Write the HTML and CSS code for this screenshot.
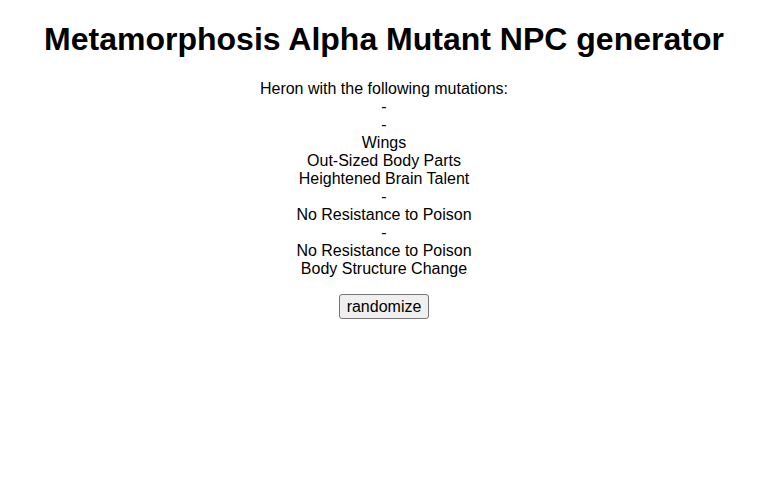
FILE: index.html
```html
<!DOCTYPE html>
<html>
<head>
<meta charset="utf-8">
<link rel="stylesheet" href="styles.css">
</head>
<body>
<h1 class="title">Metamorphosis Alpha Mutant NPC generator</h1>
<div class="result">
<div>Heron with the following mutations:</div>
<div>-</div>
<div>-</div>
<div>Wings</div>
<div>Out-Sized Body Parts</div>
<div>Heightened Brain Talent</div>
<div>-</div>
<div>No Resistance to Poison</div>
<div>-</div>
<div>No Resistance to Poison</div>
<div>Body Structure Change</div>
</div>
<div class="actions"><button class="btn">randomize</button></div>
</body>
</html>
```
FILE: styles.css
```css
body {
  margin: 8px;
  font-family: "Liberation Sans", Arial, sans-serif;
  font-size: 16px;
  color: #000;
  background: #fff;
  text-align: center;
}
.title {
  font-size: 32px;
  font-weight: bold;
  margin: 13.44px 0 21.44px;
}
.result {
  line-height: 18px;
}
.actions {
  margin-top: 16px;
}
.btn {
  font-family: "Liberation Sans", Arial, sans-serif;
  font-size: 16px;
  padding: 3px 7px 2px;
  background: #efefef;
  border: 1px solid #767676;
  border-radius: 3px;
  color: #000;
  line-height: 18px;
}
```
